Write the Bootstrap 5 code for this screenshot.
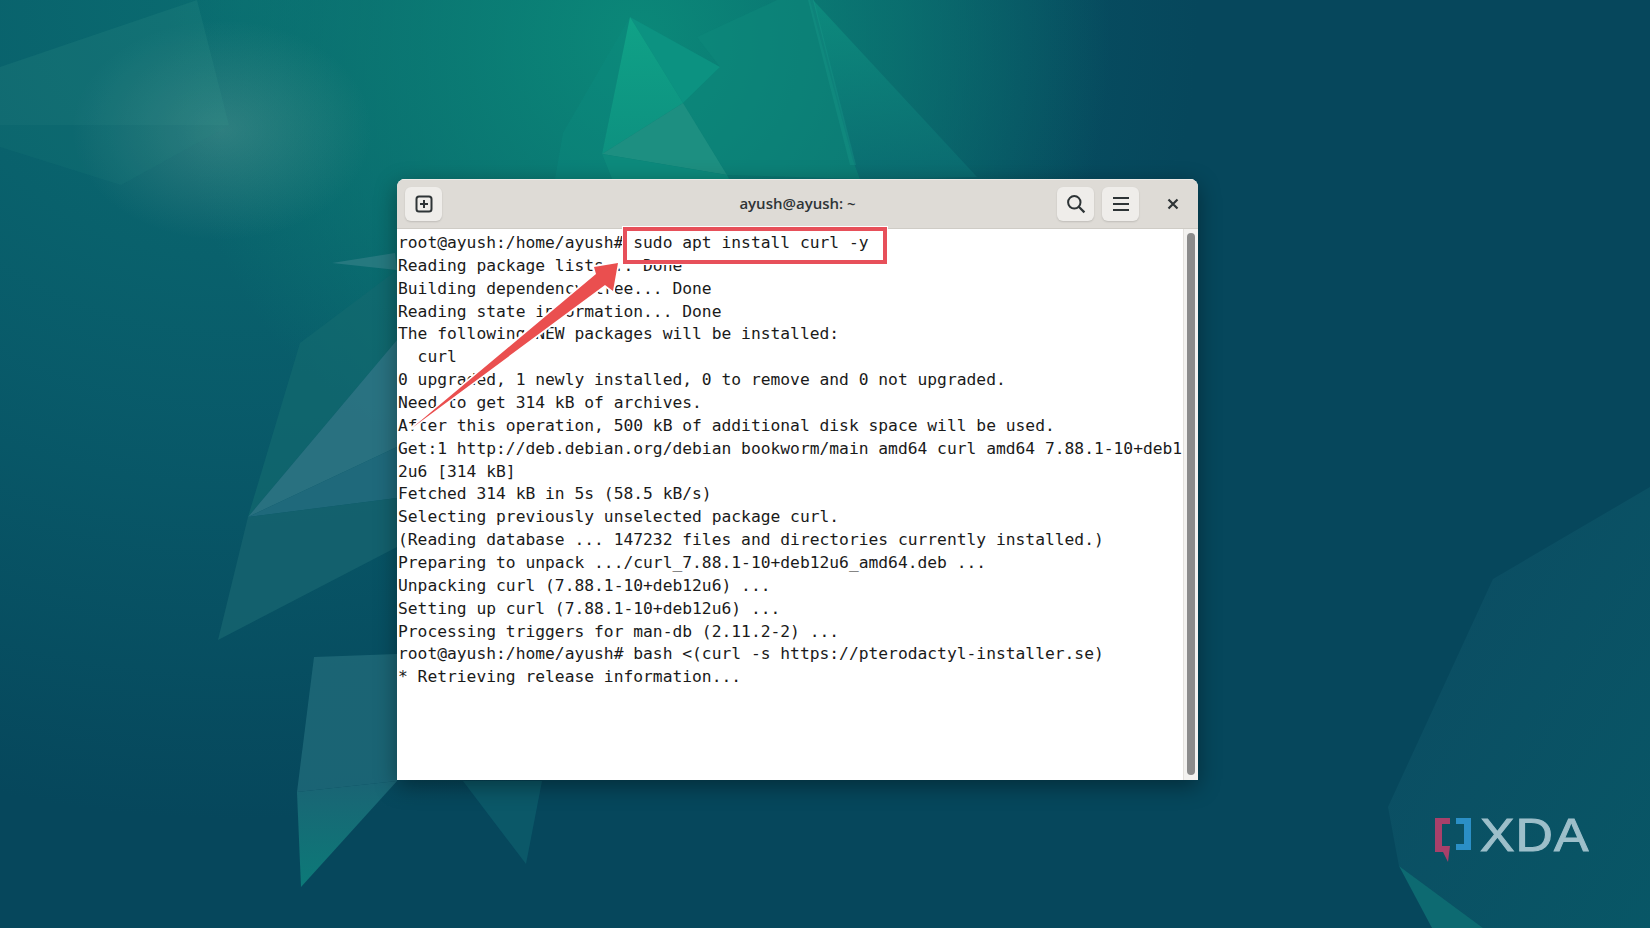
<!DOCTYPE html>
<html lang="en">
<head>
<meta charset="utf-8">
<title>Terminal</title>
<link href="https://cdn.jsdelivr.net/npm/bootstrap@5.3.0/dist/css/bootstrap.min.css" rel="stylesheet">
<style>
html,body{height:100%;margin:0;overflow:hidden;background:#07475c}
.desk{width:1650px;height:928px;background:
  radial-gradient(ellipse 150px 110px at 222px 130px,rgba(130,175,165,.3),rgba(130,175,165,0) 100%),
  radial-gradient(ellipse 470px 480px at 640px 40px,rgba(11,140,122,.92) 0%,rgba(11,125,116,.65) 55%,rgba(9,100,110,0) 100%),
  radial-gradient(ellipse 960px 820px at 240px 0,#0a6c70 0%,rgba(9,94,108,.85) 50%,rgba(7,71,92,0) 100%),
  #06475c;}
.wall{inset:0;width:1650px;height:928px}
.term-win{left:397px;top:179px;width:801px;height:601px;border-radius:8px 8px 0 0;box-shadow:0 6px 22px rgba(0,0,0,.38);background:#fff;overflow:hidden}
.term-head{height:50px;background:#dedbd6;border-top:1px solid #eceae6;border-bottom:1px solid #cfccc6;padding:0 10px 0 8px}
.hb{width:37px;height:34px;background:#efedea;border-radius:6px;box-shadow:0 1px 2px rgba(0,0,0,.14);color:#2e3436;padding:0}
.term-title{font:600 15px "Open Sans","Noto Sans",sans-serif;color:#2e3436;left:0;right:0;top:0;height:48px;line-height:46px}
.term-body{height:551px}
.term-text{flex:1 1 auto;margin:0;padding:3px 0 0 1px;font:16.3px/22.86px "DejaVu Sans Mono",monospace;color:#1a1a1a;overflow:hidden}
.term-track{width:15px;background:#f3f2f0;border-left:1px solid #e4e2de;padding:4px 3px 5px 3px}
.term-thumb{width:8px;height:100%;background:#8b8b8b;border-radius:4px}
.close-x{width:30px;height:30px;margin-left:11px}
.hl-box{left:623px;top:227px;width:264px;height:37px;border:4px solid #e7505a;outline:1.5px solid #fff}
.arrow-over{left:0;top:0;width:1650px;height:928px;pointer-events:none}
.xda-logo{left:1430px;top:815px;height:52px}
.xda-text{font:400 47px/40px "Liberation Sans",sans-serif;color:#9dbfca;-webkit-text-stroke:1px #9dbfca;letter-spacing:1px;transform:scaleX(1.1);transform-origin:left center;margin-left:8px}
</style>
</head>
<body>
<div class="desk position-relative overflow-hidden">
  <svg class="wall position-absolute" viewBox="0 0 1650 928" aria-hidden="true">
    <defs>
      <linearGradient id="g1" x1="0" y1="0" x2="0" y2="1"><stop offset="0" stop-color="#10a287"/><stop offset="1" stop-color="#0d9180"/></linearGradient>
      <linearGradient id="g2" x1="0" y1="0" x2="0" y2="1"><stop offset="0" stop-color="#0e9080"/><stop offset="1" stop-color="#0b6d72"/></linearGradient>
      <linearGradient id="g3" x1="0" y1="1" x2="0" y2="0"><stop offset="0" stop-color="#0c7a78"/><stop offset="1" stop-color="#1a6474"/></linearGradient>
      <linearGradient id="g4" x1="0" y1="0" x2="1" y2="1"><stop offset="0" stop-color="#124f68"/><stop offset="1" stop-color="#0a6670"/></linearGradient>
    </defs>
    <polygon points="0,67 197,0 229,125 0,125" fill="#3a9c8e" opacity=".17"/>
    <polygon points="0,147 121,185 221,130 229,125 0,125" fill="#2a8f84" opacity=".12"/>
    <polygon points="630,17 563,133 555,179 612,179 602,154" fill="#0e9080" opacity=".3"/>
    <polygon points="697,37 777,0 810,0 853,160 860,179 727,175 683,103 720,67" fill="#0e8a7c" opacity=".5"/>
    <polygon points="813,0 977,177 860,179 853,160" fill="url(#g2)" opacity=".75"/>
    <polygon points="808,0 814,0 856,165 850,165" fill="#1aa08d" opacity=".3"/>
    <polygon points="630,17 720,67 683,103" fill="#0c9281"/>
    <polygon points="630,17 683,103 602,154" fill="url(#g1)"/>
    <polygon points="683,103 602,154 727,175" fill="#1d8f81"/>
    <polygon points="602,154 727,175 729,179 612,179" fill="#0d8a7c"/>
    <polygon points="332,263 395,253 397,270" fill="#2b7b82" opacity=".85"/>
    <polygon points="248,517 300,343 397,270 397,340" fill="#13696f" opacity=".7"/>
    <polygon points="248,517 397,340 397,447" fill="#2f7585" opacity=".85"/>
    <polygon points="248,517 397,447 397,498" fill="#226b7d" opacity=".9"/>
    <polygon points="248,517 397,498 397,547 218,640" fill="#15636f" opacity=".85"/>
    <polygon points="314,657 397,654 397,781 297,792" fill="#1f6878" opacity=".85"/>
    <polygon points="297,792 397,781 301,887" fill="url(#g3)"/>
    <polygon points="463,781 542,781 526,864" fill="#0d5c6b" opacity=".8"/>
    <polygon points="1493,579 1650,487 1650,928 1483,928 1399,866 1388,807" fill="url(#g4)" opacity=".5"/>
    <polygon points="1399,866 1483,928 1432,928" fill="#0e6e73" opacity=".9"/>
  </svg>

  <div class="term-win position-absolute d-flex flex-column">
    <div class="term-head position-relative d-flex align-items-center justify-content-between flex-shrink-0">
      <div class="term-title position-absolute text-center">ayush@ayush: ~</div>
      <button class="hb btn d-flex align-items-center justify-content-center border-0 position-relative" aria-label="New tab">
        <svg width="18" height="18" viewBox="0 0 18 18"><rect x="1.5" y="1.5" width="15" height="15" rx="2.5" fill="none" stroke="#2e3436" stroke-width="2"/><path d="M9 5v8M5 9h8" stroke="#2e3436" stroke-width="2"/></svg>
      </button>
      <div class="d-flex align-items-center gap-2 position-relative">
        <button class="hb btn d-flex align-items-center justify-content-center border-0" aria-label="Search">
          <svg width="20" height="20" viewBox="0 0 20 20"><circle cx="8.3" cy="8.3" r="6.2" fill="none" stroke="#2e3436" stroke-width="2"/><path d="M12.8 12.8l5.6 5.6" stroke="#2e3436" stroke-width="2.2"/></svg>
        </button>
        <button class="hb btn d-flex align-items-center justify-content-center border-0" aria-label="Menu">
          <svg width="18" height="16" viewBox="0 0 18 16"><path d="M1 2h16M1 8h16M1 14h16" stroke="#2e3436" stroke-width="2"/></svg>
        </button>
        <div class="close-x d-flex align-items-center justify-content-center">
          <svg width="12" height="12" viewBox="0 0 12 12"><path d="M1.5 1.5l9 9M10.5 1.5l-9 9" stroke="#2e3436" stroke-width="2.2"/></svg>
        </div>
      </div>
    </div>
    <div class="term-body d-flex">
<pre class="term-text">root@ayush:/home/ayush# sudo apt install curl -y
Reading package lists... Done
Building dependency tree... Done
Reading state information... Done
The following NEW packages will be installed:
  curl
0 upgraded, 1 newly installed, 0 to remove and 0 not upgraded.
Need to get 314 kB of archives.
After this operation, 500 kB of additional disk space will be used.
Get:1 http://deb.debian.org/debian bookworm/main amd64 curl amd64 7.88.1-10+deb1
2u6 [314 kB]
Fetched 314 kB in 5s (58.5 kB/s)
Selecting previously unselected package curl.
(Reading database ... 147232 files and directories currently installed.)
Preparing to unpack .../curl_7.88.1-10+deb12u6_amd64.deb ...
Unpacking curl (7.88.1-10+deb12u6) ...
Setting up curl (7.88.1-10+deb12u6) ...
Processing triggers for man-db (2.11.2-2) ...
root@ayush:/home/ayush# bash &lt;(curl -s https://pterodactyl-installer.se)
* Retrieving release information...</pre>
      <div class="term-track flex-shrink-0"><div class="term-thumb"></div></div>
    </div>
  </div>

  <div class="hl-box position-absolute"></div>
  <svg class="arrow-over position-absolute" viewBox="0 0 1650 928" aria-hidden="true">
    <polygon points="412,428 596,274 594,267 618,263 613,291 605,285" fill="#ea4f4f" stroke="#fff" stroke-width="3.5" stroke-linejoin="round" paint-order="stroke"/>
  </svg>

  <div class="xda-logo position-absolute d-flex align-items-start">
    <svg width="42" height="52" viewBox="0 0 42 52"><path d="M5 3H20V9H12V31H20L18 47 13 37H5Z" fill="#a8406a"/><path d="M26 3H41V35H26V29H34V9H26Z" fill="#2b8fc6"/></svg>
    <span class="xda-text">XDA</span>
  </div>
</div>
</body>
</html>
